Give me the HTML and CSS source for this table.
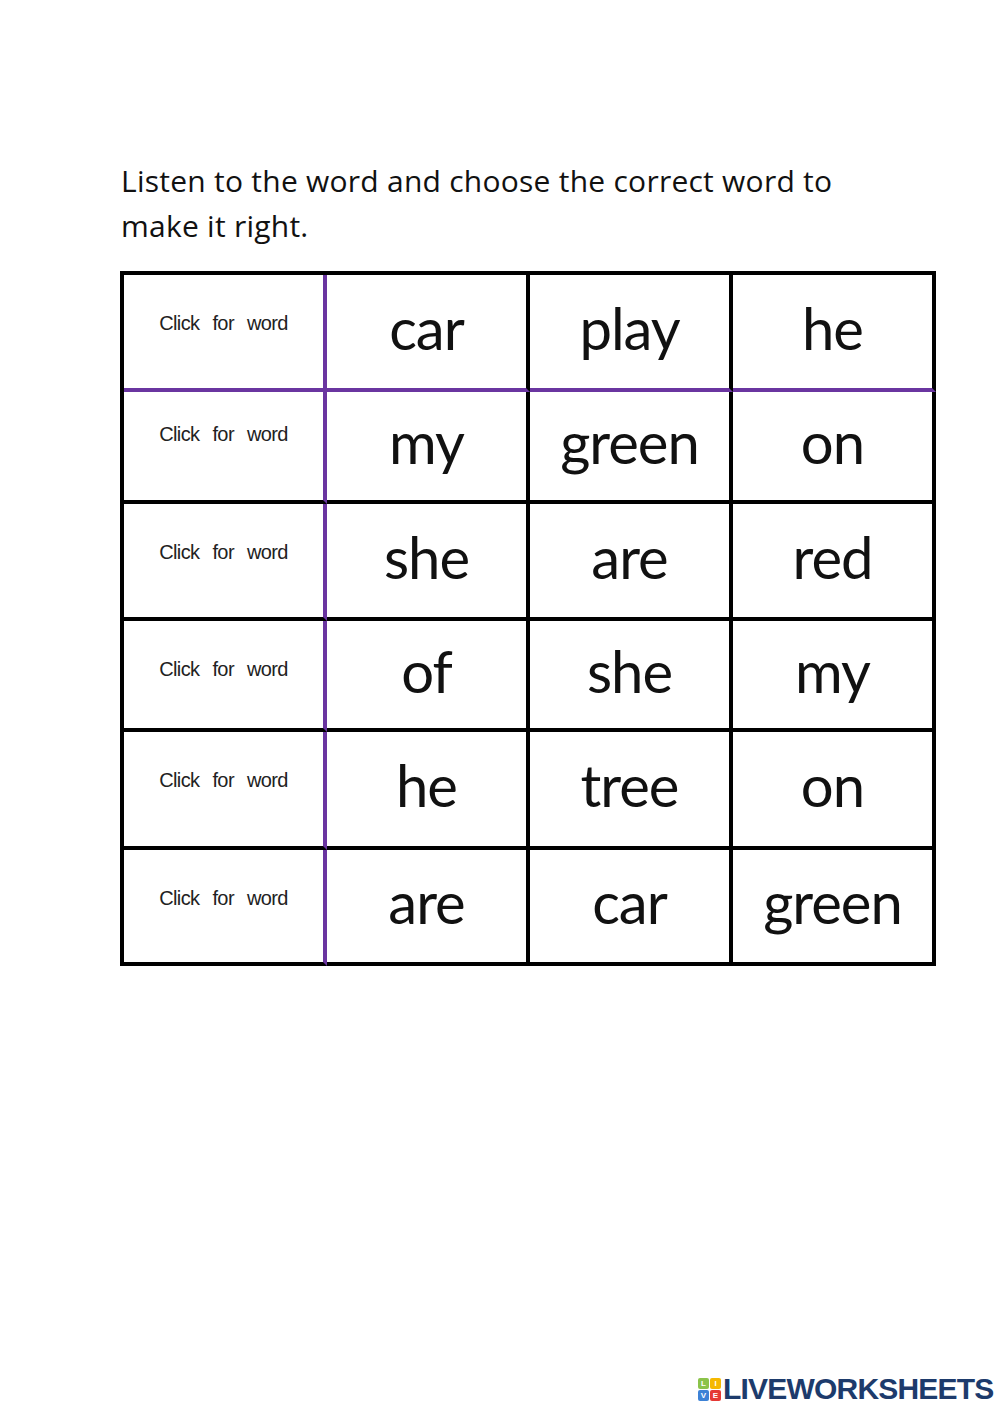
FILE: index.html
```html
<!DOCTYPE html>
<html>
<head>
<meta charset="utf-8">
<link rel="stylesheet" href="styles.css">
</head>
<body>
<div class="page">
  <p class="instr">Listen to the word and choose the correct word to<br>make it right.</p>
  <div class="grid">
    <div class="cell label r1 c1">Click for word</div>
    <div class="cell word r1">car</div>
    <div class="cell word r1">play</div>
    <div class="cell word r1">he</div>

    <div class="cell label c1 r2">Click for word</div>
    <div class="cell word">my</div>
    <div class="cell word">green</div>
    <div class="cell word">on</div>

    <div class="cell label c1">Click for word</div>
    <div class="cell word">she</div>
    <div class="cell word">are</div>
    <div class="cell word">red</div>

    <div class="cell label c1">Click for word</div>
    <div class="cell word">of</div>
    <div class="cell word">she</div>
    <div class="cell word">my</div>

    <div class="cell label c1">Click for word</div>
    <div class="cell word">he</div>
    <div class="cell word">tree</div>
    <div class="cell word">on</div>

    <div class="cell label c1">Click for word</div>
    <div class="cell word">are</div>
    <div class="cell word">car</div>
    <div class="cell word">green</div>
  </div>
  <div class="spacer"></div>
  <div class="brand">
    <div class="badge">
      <span class="sq g">L</span><span class="sq y">I</span>
      <span class="sq b">V</span><span class="sq r">E</span>
    </div>
    <span class="brandtext">LIVEWORKSHEETS</span>
  </div>
</div>
</body>
</html>
```

FILE: styles.css
```css
html, body {
  margin: 0;
  padding: 0;
  background: #fff;
}
.page {
  width: 1000px;
  height: 1413px;
  display: flex;
  flex-direction: column;
  box-sizing: border-box;
  padding: 0 0 0 120px;
}
.instr {
  margin: 158px 0 0 1px;
  font-family: "Open Sans", "DejaVu Sans", sans-serif;
  font-size: 30px;
  line-height: 45px;
  color: #111;
  letter-spacing: 0.25px;
}
.grid {
  margin-top: 23px;
  display: grid;
  grid-template-columns: repeat(4, 203px);
  grid-template-rows: 117px 112px 117px 111px 118px 116px;
  width: 812px;
  border-left: 4px solid #000;
  border-top: 4px solid #000;
}
.cell {
  box-sizing: border-box;
  border-right: 4px solid #000;
  border-bottom: 4px solid #000;
  display: flex;
  justify-content: center;
  background: #fff;
}
.c1 {
  border-right-color: #6a35a0;
}
.r1 {
  border-bottom-color: #6a35a0;
}
.label {
  align-items: flex-start;
  padding-top: 37px;
  font-family: "Liberation Sans", Arial, sans-serif;
  font-size: 20px;
  line-height: 22px;
  color: #222;
  word-spacing: 8px;
  letter-spacing: -0.6px;
}
.label.r2 {
  padding-top: 31px;
}
.word {
  align-items: center;
  font-family: "Lato", "Noto Sans", sans-serif;
  font-size: 58px;
  line-height: 1;
  color: #111;
  letter-spacing: -1px;
  padding-bottom: 8px;
}
.spacer {
  flex: 1;
}
.brand {
  display: flex;
  align-items: center;
  gap: 2px;
  margin: 0 0 6px 578px;
}
.badge {
  display: grid;
  grid-template-columns: 11px 11px;
  grid-template-rows: 11px 11px;
  gap: 1px;
}
.sq {
  display: flex;
  align-items: center;
  justify-content: center;
  font-family: "Liberation Sans", Arial, sans-serif;
  font-weight: bold;
  font-size: 8px;
  color: #fff;
  border-radius: 2px;
}
.g { background: #8bc34a; }
.y { background: #f5b800; }
.b { background: #3d82d6; }
.r { background: #e53935; }
.brandtext {
  font-family: "Liberation Sans", Arial, sans-serif;
  font-weight: bold;
  font-size: 30px;
  line-height: 36px;
  color: #1d3b6c;
  letter-spacing: -0.8px;
}
```
